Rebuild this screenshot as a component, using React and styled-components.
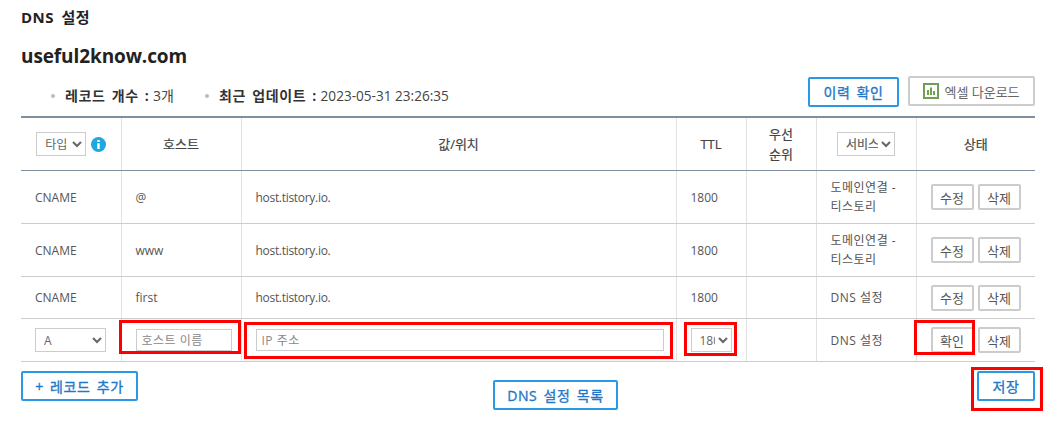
import styled, { createGlobalStyle } from "styled-components"

const FONT = `"Open Sans", "Noto Sans CJK KR", sans-serif`

const records = [
  { type: "CNAME", host: "@", value: "host.tistory.io.", ttl: "1800", service: ["도메인연결 -", "티스토리"], tall: true },
  { type: "CNAME", host: "www", value: "host.tistory.io.", ttl: "1800", service: ["도메인연결 -", "티스토리"], tall: true },
  { type: "CNAME", host: "first", value: "host.tistory.io.", ttl: "1800", service: ["DNS 설정"] },
]

const App = () => {
  return (
    <Page>
      <GlobalStyle />
      <Crumb>DNS 설정</Crumb>
      <Domain>useful2know.com</Domain>
      <Toolbar>
        <Summary>
          <SummaryItem><b>레코드 개수 :</b> 3개</SummaryItem>
          <SummaryItem><b>최근 업데이트 :</b> <Stamp>2023-05-31 23:26:35</Stamp></SummaryItem>
        </Summary>
        <Actions>
          <BlueButton $width={91}>이력 확인</BlueButton>
          <ExcelButton>
            <svg width="16" height="16" viewBox="0 0 16 16">
              <rect x="1" y="1" width="14" height="14" fill="#fff" stroke="#6f9f57" strokeWidth="2" />
              <path d="M4 7h2v5H4zM7 4.500h2V12H7zM10 8h2v4h-2z" fill="#6f9f57" />
            </svg>
            엑셀 다운로드
          </ExcelButton>
        </Actions>
      </Toolbar>

      <Table>
        <colgroup>
          <col width="100" />
          <col width="120" />
          <col width="435" />
          <col width="70" />
          <col width="70" />
          <col width="100" />
          <col width="119" />
        </colgroup>
        <thead>
          <tr>
            <Th>
              <TypeFilter>
                <HeadSelect $width={50}><option>타입</option></HeadSelect>
                <svg width="15" height="15" viewBox="0 0 15 15">
                  <circle cx="7.500" cy="7.500" r="7.500" fill="#1ea7e0" />
                  <path d="M6.300 3h2.400v2H6.300zM6.300 6.300h2.400V12H6.300z" fill="#fff" />
                </svg>
              </TypeFilter>
            </Th>
            <Th>호스트</Th>
            <Th>값/위치</Th>
            <Th>TTL</Th>
            <Th>우선<br />순위</Th>
            <Th><HeadSelect $width={58}><option>서비스</option></HeadSelect></Th>
            <Th>상태</Th>
          </tr>
        </thead>
        <tbody>
          {records.map((r) => (
            <Row key={r.host} $height={r.tall ? 53 : 42}>
              <Td>{r.type}</Td>
              <Td>{r.host}</Td>
              <ValueCell>{r.value}</ValueCell>
              <Td>{r.ttl}</Td>
              <Td />
              <ServiceCell>{r.service.map((s) => <div key={s}>{s}</div>)}</ServiceCell>
              <StateCell>
                <SmallButton>수정</SmallButton>
                <SmallButton>삭제</SmallButton>
              </StateCell>
            </Row>
          ))}
          <Row $height={43}>
            <Td>
              <RowSelect $width={71}><option>A</option></RowSelect>
            </Td>
            <Td><TextInput placeholder="호스트 이름" $width={96} /></Td>
            <Td><TextInput placeholder="IP 주소" $width={408} /></Td>
            <Td><RowSelect $width={41}><option>1800</option></RowSelect></Td>
            <Td />
            <ServiceCell>DNS 설정</ServiceCell>
            <StateCell>
              <SmallButton>확인</SmallButton>
              <SmallButton>삭제</SmallButton>
            </StateCell>
          </Row>
        </tbody>
      </Table>

      <Footer>
        <BlueButton $width={117}>+ 레코드 추가</BlueButton>
        <ListButton $width={125}>DNS 설정 목록</ListButton>
        <BlueButton $width={58}>저장</BlueButton>
      </Footer>

      <RedMark $x={119} $y={320} $w={122} $h={34} />
      <RedMark $x={244} $y={322} $w={429} $h={37} />
      <RedMark $x={684} $y={322} $w={53} $h={34} />
      <RedMark $x={914} $y={320} $w={61} $h={35} />
      <RedMark $x={971} $y={367} $w={72} $h={44} />
    </Page>
  )
}

export default App

const GlobalStyle = createGlobalStyle`
  html, body {
    margin:0;
    background:#fff;
  }
  body {
    font-family:${FONT};
    color:#444;
  }
`
const Page = styled.div`
  position:relative;
  width:1048px;
  height:430px;
  padding:0 13px 0 21px;
  box-sizing:border-box;
  overflow:hidden;
`
const Crumb = styled.div`
  padding-top:6px;
  height:22px;
  line-height:22px;
  font-size:15px;
  font-weight:700;
  letter-spacing:.5px;
  word-spacing:3px;
  color:#222;
`
const Domain = styled.h1`
  margin:14px 0 0;
  height:28px;
  line-height:28px;
  font-size:19px;
  font-weight:700;
  letter-spacing:-.1px;
  color:#222;
`
const Toolbar = styled.div`
  display:flex;
  justify-content:space-between;
  height:40px;
  margin-top:6px;
`
const Summary = styled.ul`
  display:flex;
  gap:45px;
  list-style:none;
  margin:0;
  padding:10px 0 0 44px;
  font-size:14px;
  line-height:20px;
  color:#444;
  b {
    font-size:14px;
    font-weight:700;
    letter-spacing:.6px;
    word-spacing:2px;
    color:#333;
  }
`
const SummaryItem = styled.li`
  position:relative;
  white-space:nowrap;
  &:before {
    content:"";
    position:absolute;
    left:-14px;
    top:8px;
    width:4px;
    height:4px;
    border-radius:50%;
    background:#bbb;
  }
`
const Stamp = styled.span`
  font-size:13.6px;
`
const Actions = styled.div`
  display:flex;
  align-items:flex-start;
  gap:9px;
`
const BlueButton = styled.button`
  width:${(p) => p.$width}px;
  height:30px;
  padding:0;
  margin-top:1px;
  border:2px solid #2b98e4;
  border-radius:2px;
  background:#fff;
  color:#1f78c8;
  font-family:${FONT};
  font-size:14px;
  font-weight:400;
  letter-spacing:.6px;
  word-spacing:2px;
  -webkit-text-stroke:.35px #1f78c8;
  box-sizing:border-box;
`
const ListButton = styled(BlueButton)`
  margin-top:10px;
`
const ExcelButton = styled.button`
  display:flex;
  align-items:center;
  justify-content:center;
  gap:5px;
  width:127px;
  height:30px;
  padding:0;
  border:2px solid #ccc;
  border-radius:2px;
  background:#fff;
  color:#666;
  font-family:${FONT};
  font-size:13px;
  box-sizing:border-box;
`
const Table = styled.table`
  width:1014px;
  table-layout:fixed;
  border-collapse:collapse;
  border-top:2px solid #7f8fa0;
  font-size:12px;
  color:#555;
`
const Th = styled.th`
  height:52px;
  padding:0;
  border-bottom:1px solid #7f8fa0;
  border-left:1px solid #e2e2e2;
  font-size:13px;
  font-weight:400;
  line-height:20px;
  color:#444;
  text-align:center;
  -webkit-text-stroke:.2px #444;
  &:first-child {
    border-left:0;
  }
`
const TypeFilter = styled.div`
  display:flex;
  align-items:center;
  justify-content:center;
  gap:5px;
  padding-left:1px;
  -webkit-text-stroke:0;
`
const Row = styled.tr`
  height:${(p) => p.$height}px;
`
const Td = styled.td`
  padding:0 14px;
  border-bottom:1px solid #ccc;
  border-left:1px solid #e2e2e2;
  line-height:19px;
  &:first-child {
    border-left:0;
  }
`
const ValueCell = styled(Td)`
  letter-spacing:-.3px;
`
const ServiceCell = styled(Td)`
  padding-right:0;
  letter-spacing:.5px;
  white-space:nowrap;
`
const StateCell = styled(Td)`
  padding:0 0 0 14px;
  white-space:nowrap;
`
const SmallButton = styled.button`
  width:43px;
  height:26px;
  margin-right:4px;
  padding:0;
  border:2px solid #ccc;
  border-radius:2px;
  background:#fff;
  color:#555;
  font-family:${FONT};
  font-size:13px;
  box-sizing:border-box;
`
const HeadSelect = styled.select`
  width:${(p) => p.$width}px;
  height:24px;
  padding:0 0 0 4px;
  border:1px solid #ccc;
  border-radius:0;
  background:#fff;
  color:#666;
  font-family:${FONT};
  font-size:12px;
  box-sizing:border-box;
`
const RowSelect = styled(HeadSelect)`
  vertical-align:middle;
`
const TextInput = styled.input`
  display:block;
  width:${(p) => p.$width}px;
  height:22px;
  padding:0 5px;
  border:1px solid #ccc;
  border-radius:0;
  font-family:${FONT};
  font-size:12px;
  letter-spacing:.5px;
  box-sizing:border-box;
  &::placeholder {
    color:#888;
  }
`
const Footer = styled.div`
  display:grid;
  grid-template-columns:472px 125px 1fr;
  margin-top:8px;
  align-items:start;
  & > button:last-child {
    justify-self:end;
  }
`
const RedMark = styled.div`
  position:absolute;
  left:${(p) => p.$x}px;
  top:${(p) => p.$y}px;
  width:${(p) => p.$w}px;
  height:${(p) => p.$h}px;
  border:3px solid #f00;
  box-sizing:border-box;
  pointer-events:none;
`
